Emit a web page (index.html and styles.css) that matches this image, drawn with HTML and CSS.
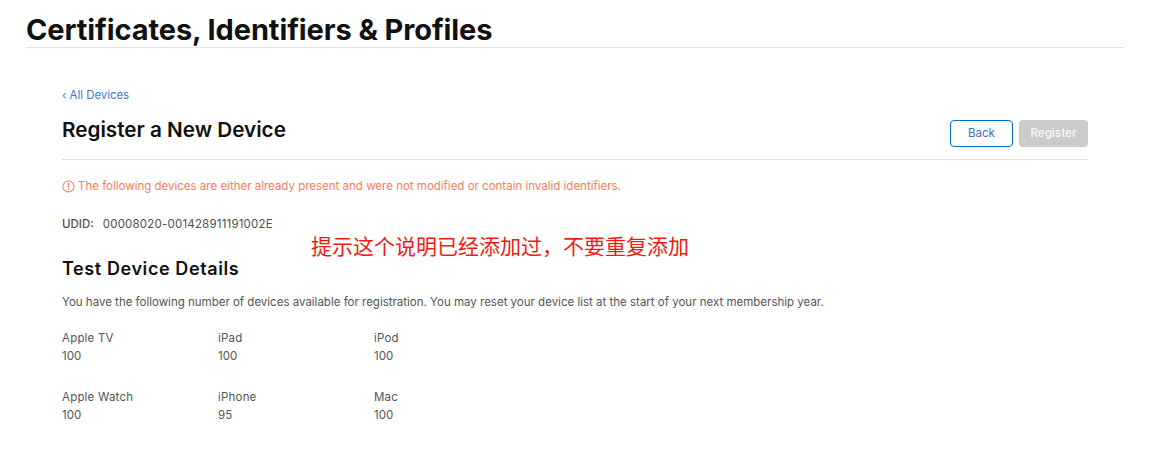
FILE: index.html
```html
<!DOCTYPE html>
<html lang="en">
<head>
<meta charset="utf-8">
<title>Certificates, Identifiers &amp; Profiles</title>
<link rel="stylesheet" href="styles.css">
</head>
<body>
<header class="page-header">
  <h1 class="page-title">Certificates, Identifiers &amp; Profiles</h1>
</header>
<main class="content">
  <a class="back-link" href="#">‹ All Devices</a>
  <div class="title-row">
    <h2 class="section-title">Register a New Device</h2>
    <div class="actions">
      <button class="btn btn-back" type="button">Back</button>
      <button class="btn btn-register" type="button">Register</button>
    </div>
  </div>
  <p class="error">
    <svg class="error-icon" viewBox="0 0 14 14" width="13" height="13" aria-hidden="true">
      <circle cx="7" cy="7" r="6" fill="none" stroke="currentColor" stroke-width="1.1"/>
      <path d="M7 3.4V8" fill="none" stroke="currentColor" stroke-width="1.3" stroke-linecap="round"/>
      <circle cx="7" cy="10.2" r="0.8" fill="currentColor"/>
    </svg>
    The following devices are either already present and were not modified or contain invalid identifiers.
  </p>
  <p class="udid"><span class="udid-label">UDID:</span><span class="udid-value">00008020-001428911191002E</span></p>
  <h3 class="details-title">Test Device Details</h3>
  <p class="details-text">You have the following number of devices available for registration. You may reset your device list at the start of your next membership year.</p>
  <div class="device-grid">
    <div class="device"><div class="device-name">Apple TV</div><div>100</div></div>
    <div class="device"><div class="device-name">iPad</div><div>100</div></div>
    <div class="device"><div class="device-name">iPod</div><div>100</div></div>
    <div class="device"><div class="device-name">Apple Watch</div><div>100</div></div>
    <div class="device"><div class="device-name">iPhone</div><div>95</div></div>
    <div class="device"><div class="device-name">Mac</div><div>100</div></div>
  </div>
</main>
<div class="annotation" lang="zh-CN">提示这个说明已经添加过，不要重复添加</div>
</body>
</html>
```
FILE: styles.css
```css
* { box-sizing: border-box; }
html, body { margin: 0; padding: 0; }
body {
  position: relative;
  height: 453px;
  overflow: hidden;
  background: #fff;
  font-family: Inter, "Liberation Sans", sans-serif;
  color: #333;
}
.page-header {
  margin: 0 45px 0 26px;
  height: 48px;
  padding-top: 12px;
  border-bottom: 1px solid #e3e3e3;
}
.page-title {
  margin: 0;
  font-size: 29px;
  line-height: 35px;
  font-weight: 700;
  letter-spacing: -0.1px;
  color: #111;
}
.content {
  margin: 0 81px 0 62px;
  padding-top: 40px;
}
.back-link {
  display: block;
  font-size: 11.4px;
  line-height: 15px;
  color: #3a7bc8;
  text-decoration: none;
}
.title-row {
  display: flex;
  justify-content: space-between;
  align-items: flex-start;
  height: 57px;
  padding-top: 13px;
  border-bottom: 1px solid #dcdcdc;
}
.section-title {
  margin: 0;
  font-size: 20.7px;
  line-height: 27px;
  font-weight: 600;
  color: #111;
}
.actions { display: flex; gap: 6px; margin-top: 4px; }
.btn {
  height: 27px;
  border-radius: 4px;
  font-family: inherit;
  font-size: 11.5px;
  padding: 0 0 1px;
}
.btn-back {
  width: 63px;
  background: #fff;
  border: 1px solid #0070c9;
  color: #3a70c0;
}
.btn-register {
  width: 69px;
  background: #cbcbcb;
  border: 0;
  color: #f4f4f4;
  font-weight: 600;
}
.error {
  display: flex;
  align-items: center;
  gap: 3px;
  margin: 18px 0 0;
  font-size: 11.5px;
  line-height: 16px;
  color: #f47d62;
}
.error-icon { flex: none; }
.udid {
  display: flex;
  gap: 9px;
  margin: 22px 0 0;
  font-size: 11.5px;
  line-height: 16px;
  color: #505050;
}
.udid-label { font-weight: 500; }
.udid-value { letter-spacing: 0.2px; }
.details-title {
  margin: 24px 0 0;
  font-size: 18px;
  line-height: 26px;
  font-weight: 600;
  letter-spacing: 0.6px;
  color: #111;
}
.details-text {
  margin: 12px 0 0;
  font-size: 11.5px;
  line-height: 16px;
  color: #555;
}
.device-grid {
  display: grid;
  grid-template-columns: repeat(3, 156px);
  row-gap: 24px;
  margin-top: 20px;
  font-size: 11.5px;
  line-height: 17.5px;
  color: #555;
}
.device-name { letter-spacing: 0.2px; }
.annotation {
  position: absolute;
  left: 311px;
  top: 231px;
  font-family: "Noto Sans CJK SC", sans-serif;
  font-size: 21px;
  line-height: 28px;
  color: #f01c14;
  white-space: nowrap;
}
```
